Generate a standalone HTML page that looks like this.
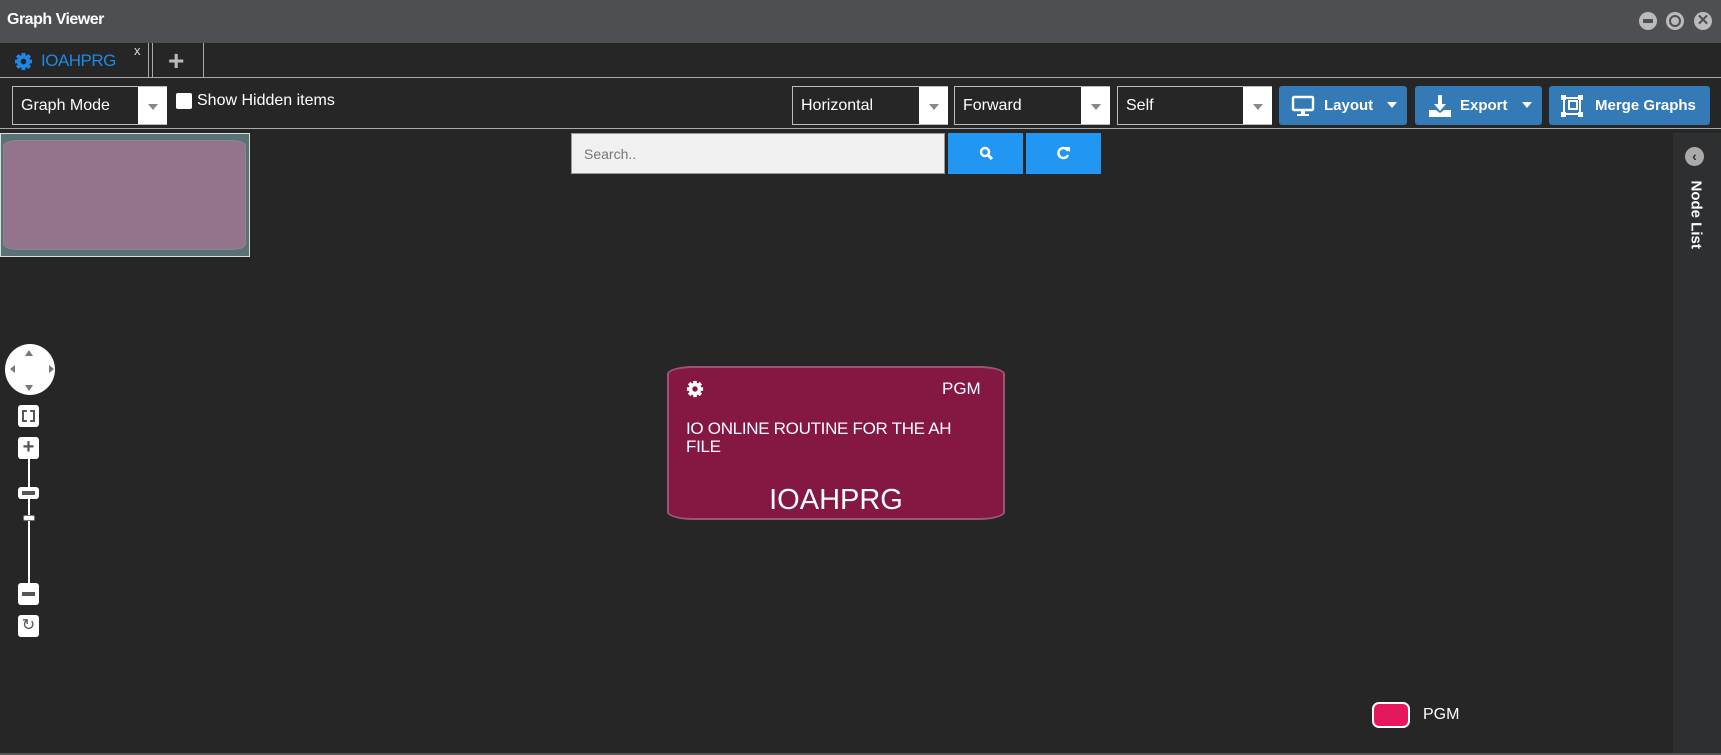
<!DOCTYPE html>
<html><head><meta charset="utf-8"><style>
*{box-sizing:border-box;margin:0;padding:0}
body{width:1721px;height:755px;background:#262626;font-family:"Liberation Sans",sans-serif;color:#fff;position:relative;overflow:hidden}
.a{position:absolute}
.sel{position:absolute;border:1px solid #bbb;border-right:none;background:#262626;height:39px;top:86px;font-size:16px;padding:10px 0 0 8px}
.sel .ar{position:absolute;right:0;top:0;bottom:0;width:29px;background:#fff}
.sel .ar:after{content:"";position:absolute;left:10px;top:17px;border:5px solid transparent;border-top:6px solid #888}
.btn{position:absolute;top:86px;height:39px;background:#337ab7;border-radius:3px;font-weight:bold;font-size:15px;color:#fff}
.ctl{position:absolute;left:18px;width:21px;height:22px;background:#fff;border-radius:3px}
</style></head><body>
<div class="a" style="left:0;top:0;width:1721px;height:43px;background:#4e4f53"></div>
<div class="a" style="left:7px;top:11px;font-weight:bold;font-size:16px;letter-spacing:-0.5px">Graph Viewer</div>
<div class="a" style="left:1639px;top:12px;width:18px;height:18px;border-radius:50%;background:#bbb"><div class="a" style="left:4px;top:7px;width:10px;height:4px;background:#4e4f53"></div></div>
<div class="a" style="left:1666px;top:12px;width:18px;height:18px;border-radius:50%;background:#bbb"><div class="a" style="left:3px;top:3px;width:12px;height:12px;border:2px solid #4e4f53;border-radius:50%"></div></div>
<div class="a" style="left:1694px;top:12px;width:18px;height:18px;border-radius:50%;background:#bbb;color:#4e4f53;font-weight:bold;font-size:15px;text-align:center;line-height:18px">✕</div>
<div class="a" style="left:0;top:77px;width:1721px;height:1px;background:#aaa"></div>
<div class="a" style="left:148px;top:43px;width:1px;height:34px;background:#aaa"></div>
<div class="a" style="left:152px;top:43px;width:1px;height:34px;background:#aaa"></div>
<div class="a" style="left:203px;top:43px;width:1px;height:34px;background:#aaa"></div>
<svg class="a" style="left:14px;top:52px" width="19" height="19" viewBox="0 0 20 20"><g fill="#1e88e5"><circle cx="10" cy="10" r="7"/><g stroke="#1e88e5" stroke-width="4"><line x1="10" y1="1" x2="10" y2="19"/><line x1="1" y1="10" x2="19" y2="10"/><line x1="3.5" y1="3.5" x2="16.5" y2="16.5"/><line x1="16.5" y1="3.5" x2="3.5" y2="16.5"/></g></g><circle cx="10" cy="10" r="3" fill="#262626"/></svg>
<div class="a" style="left:41px;top:51px;font-size:17px;color:#1e88e5;letter-spacing:-0.5px">IOAHPRG</div>
<div class="a" style="left:134px;top:43px;font-size:13px;color:#ddd">x</div>
<div class="a" style="left:168px;top:45px;font-size:28px;font-weight:bold;color:#bbb">+</div>
<div class="a" style="left:0;top:128px;width:1721px;height:1px;background:#aaa"></div>
<div class="sel" style="left:12px;width:155px">Graph Mode<div class="ar"></div></div>
<div class="a" style="left:176px;top:93px;width:16px;height:16px;background:#fff;border-radius:2px"></div>
<div class="a" style="left:197px;top:92px;font-size:16px">Show Hidden items</div>
<div class="sel" style="left:792px;width:156px">Horizontal<div class="ar"></div></div>
<div class="sel" style="left:954px;width:156px">Forward<div class="ar"></div></div>
<div class="sel" style="left:1117px;width:155px">Self<div class="ar"></div></div>
<div class="btn" style="left:1279px;width:128px"><svg class="a" style="left:12px;top:9px" width="24" height="22" viewBox="0 0 24 22"><rect x="2" y="2" width="20" height="13" rx="1" fill="none" stroke="#fff" stroke-width="2.4"/><rect x="10" y="15" width="4" height="4" fill="#fff"/><rect x="6" y="19" width="12" height="2" fill="#fff"/></svg><span class="a" style="left:45px;top:11px">Layout</span><span class="a" style="left:108px;top:16px;border:5px solid transparent;border-top:6px solid #fff"></span></div>
<div class="btn" style="left:1415px;width:127px"><svg class="a" style="left:13px;top:8px" width="24" height="24" viewBox="0 0 24 24"><path d="M10 1h4v9h4l-6 7-6-7h4z" fill="#fff"/><path d="M1 16h7l4 3 4-3h7v7H1z" fill="#fff"/></svg><span class="a" style="left:45px;top:11px">Export</span><span class="a" style="left:107px;top:16px;border:5px solid transparent;border-top:6px solid #fff"></span></div>
<div class="btn" style="left:1549px;width:161px"><svg class="a" style="left:12px;top:9px" width="22" height="22" viewBox="0 0 22 22"><rect x="3" y="3" width="16" height="16" fill="none" stroke="#fff" stroke-width="2"/><rect x="8" y="6" width="8" height="8" fill="none" stroke="#fff" stroke-width="2"/><g fill="#fff"><rect x="0" y="0" width="5" height="5"/><rect x="17" y="0" width="5" height="5"/><rect x="0" y="17" width="5" height="5"/><rect x="17" y="17" width="5" height="5"/></g></svg><span class="a" style="left:46px;top:11px">Merge Graphs</span></div>
<div class="a" style="left:0;top:133px;width:250px;height:124px;background:#5a7276;border:1px solid #ddd"><div class="a" style="left:2px;top:6px;width:243px;height:110px;background:#94738c;border-radius:14px/6px;border:1px solid #888"></div></div>
<div class="a" style="left:571px;top:133px;width:374px;height:41px;background:#f0f0f0;border:1px solid #999;color:#777;font-size:14px;padding:12px 12px">Search..</div>
<div class="a" style="left:948px;top:133px;width:75px;height:41px;background:#2196f3"><svg class="a" style="left:31px;top:13px" width="14" height="14" viewBox="0 0 14 14"><circle cx="6" cy="6" r="4" fill="none" stroke="#fff" stroke-width="2.5"/><line x1="9" y1="9" x2="13" y2="13" stroke="#fff" stroke-width="3"/></svg></div>
<div class="a" style="left:1026px;top:133px;width:75px;height:41px;background:#2196f3"><svg class="a" style="left:31px;top:13px" width="14" height="14" viewBox="0 0 14 14"><path d="M11 5A5 5 0 1 0 11 9" fill="none" stroke="#fff" stroke-width="2.5"/><path d="M8 1h5v5z" fill="#fff"/></svg></div>
<div class="a" style="left:1673px;top:133px;width:48px;height:622px;background:#2e2f31"></div>
<div class="a" style="left:1685px;top:147px;width:19px;height:19px;border-radius:50%;background:#aaa;color:#2e2f31;font-weight:bold;font-size:14px;text-align:center;line-height:19px">‹</div>
<div class="a" style="left:1684px;top:202px;transform:rotate(90deg);transform-origin:center;width:60px;margin-left:-18px;font-weight:bold;font-size:15px;white-space:nowrap">Node List</div>
<div class="a" style="left:5px;top:344px;width:50px;height:51px;border-radius:50%;background:#fff"></div>
<div class="a" style="left:25px;top:346px;border:4px solid transparent;border-bottom:6px solid #777"></div>
<div class="a" style="left:25px;top:385px;border:4px solid transparent;border-top:6px solid #777"></div>
<div class="a" style="left:6px;top:365px;border:4px solid transparent;border-right:5px solid #777"></div>
<div class="a" style="left:49px;top:365px;border:4px solid transparent;border-left:5px solid #777"></div>
<div class="ctl" style="top:405px"><div class="a" style="left:4px;top:5px;width:13px;height:12px;border:2px dashed #555"></div></div>
<div class="ctl" style="top:437px;color:#555;font-weight:bold;font-size:20px;text-align:center;line-height:21px">+</div>
<div class="a" style="left:28px;top:459px;width:2px;height:124px;background:#fff"></div>
<div class="ctl" style="top:487px;height:12px"><div class="a" style="left:4px;top:4px;width:13px;height:4px;background:#555"></div></div>
<div class="a" style="left:23px;top:515px;width:12px;height:6px;background:#fff;border:1px solid #777;border-radius:2px"></div>
<div class="ctl" style="top:583px"><div class="a" style="left:4px;top:9px;width:13px;height:4px;background:#555"></div></div>
<div class="ctl" style="top:615px;color:#555;font-size:16px;text-align:center;line-height:22px">↻</div>
<div class="a" style="left:667px;top:366px;width:338px;height:154px;background:#841842;border:2px solid #9a5575;border-radius:26px/8px"></div>
<svg class="a" style="left:686px;top:380px" width="18" height="18" viewBox="0 0 20 20"><g fill="#fff"><circle cx="10" cy="10" r="7"/><g stroke="#fff" stroke-width="4"><line x1="10" y1="1" x2="10" y2="19"/><line x1="1" y1="10" x2="19" y2="10"/><line x1="3.5" y1="3.5" x2="16.5" y2="16.5"/><line x1="16.5" y1="3.5" x2="3.5" y2="16.5"/></g></g><circle cx="10" cy="10" r="3" fill="#841842"/></svg>
<div class="a" style="left:942px;top:379px;font-size:17px">PGM</div>
<div class="a" style="left:686px;top:420px;font-size:17px;line-height:18px;width:315px;white-space:nowrap;letter-spacing:-0.3px">IO ONLINE ROUTINE FOR THE AH<br>FILE</div>
<div class="a" style="left:667px;top:484px;width:338px;text-align:center;font-size:29px">IOAHPRG</div>
<div class="a" style="left:1372px;top:702px;width:38px;height:26px;background:#e5185e;border:2px solid #fff;border-radius:7px"></div>
<div class="a" style="left:1423px;top:706px;font-size:16px">PGM</div>
<div class="a" style="left:0;top:753px;width:1721px;height:2px;background:#555"></div>
</body></html>
